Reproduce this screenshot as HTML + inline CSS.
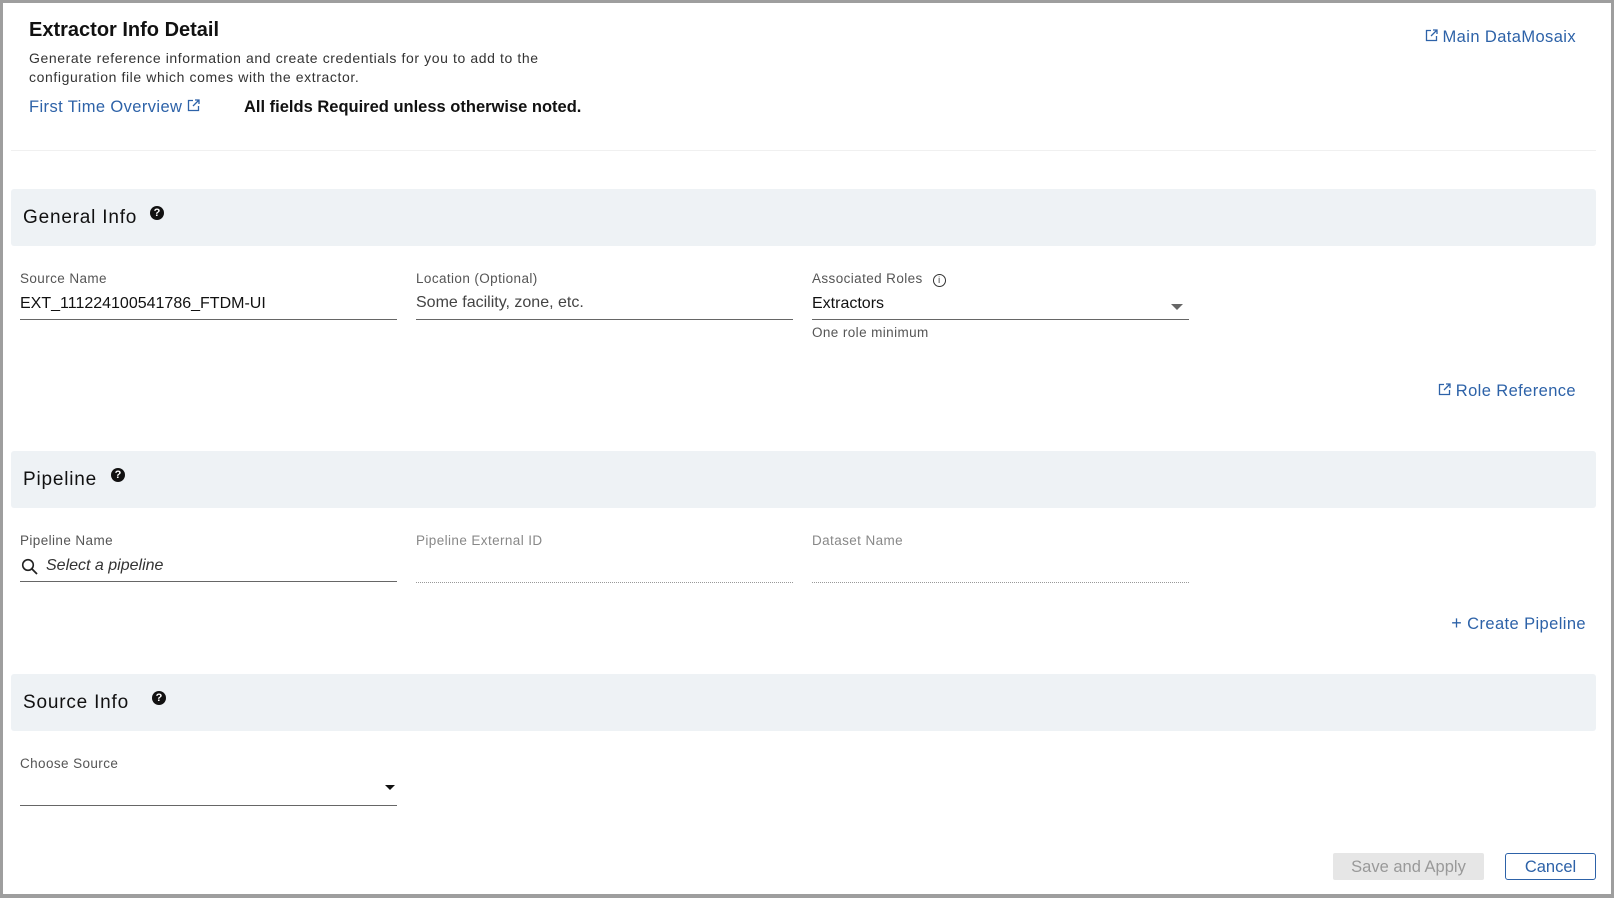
<!DOCTYPE html>
<html><head><meta charset="utf-8"><style>
*{margin:0;padding:0;box-sizing:border-box}
body{width:1614px;height:898px;overflow:hidden;background:#fff;font-family:"Liberation Sans",Arial,sans-serif;color:#111;position:relative}
.frame{position:absolute;left:0;top:0;width:1614px;height:898px;border:3px solid #9e9e9e;border-bottom-width:4px}
.a{position:absolute;white-space:nowrap}
.band{position:absolute;left:11px;width:1585px;height:57px;background:#eef2f5;border-radius:3px}
.band .t{position:absolute;left:12px;top:18px;font-size:19px;letter-spacing:.8px;color:#111}
.q{position:absolute;top:17px;width:14px;height:14px;border-radius:50%;background:#111;color:#fff;font-size:11px;font-weight:bold;text-align:center;line-height:14px}
.lbl{font-size:13.5px;color:#555;letter-spacing:.4px}
.val{font-size:16px;color:#111}
.ul{position:absolute;height:1px;background:#666;width:377px}
.dot{position:absolute;width:377px;border-top:1px dotted #999}
.link{color:#2d62a8;font-size:16.5px;letter-spacing:.4px}
.ext{display:inline-block;vertical-align:0px}
</style></head><body>
<div class="frame"></div>
<div class="a" style="left:29px;top:19px;font-size:20px;font-weight:bold">Extractor Info Detail</div>
<div class="a" style="left:29px;top:49px;font-size:14px;color:#333;line-height:18.5px;letter-spacing:.6px">Generate reference information and create credentials for you to add to the<br>configuration file which comes with the extractor.</div>
<div class="a link" style="left:29px;top:98px">First Time Overview <svg class="ext" width="13" height="13" viewBox="0 0 13 13"><path d="M6 1.5H1.5v10h10V7M8 1h4v4M12 1L6 7" fill="none" stroke="#2d62a8" stroke-width="1.3"/></svg></div>
<div class="a" style="left:244px;top:98px;font-size:16.5px;font-weight:bold">All fields Required unless otherwise noted.</div>
<div class="a link" style="right:38px;top:28px"><svg class="ext" width="13" height="13" viewBox="0 0 13 13"><path d="M6 1.5H1.5v10h10V7M8 1h4v4M12 1L6 7" fill="none" stroke="#2d62a8" stroke-width="1.3"/></svg> Main DataMosaix</div>
<div class="a" style="left:11px;top:150px;width:1585px;height:1px;background:#f0f0f0"></div>

<div class="band" style="top:189px"><div class="t">General Info</div><div class="q" style="left:139px">?</div></div>
<div class="a lbl" style="left:20px;top:271px">Source Name</div>
<div class="a val" style="left:20px;top:295px">EXT_111224100541786_FTDM-UI</div>
<div class="ul" style="left:20px;top:319px"></div>
<div class="a lbl" style="left:416px;top:271px">Location (Optional)</div>
<div class="a val" style="left:416px;top:294px;color:#444">Some facility, zone, etc.</div>
<div class="ul" style="left:416px;top:319px"></div>
<div class="a lbl" style="left:812px;top:271px">Associated Roles <span style="display:inline-block;width:13px;height:13px;border:1.3px solid #333;border-radius:50%;font-size:9px;text-align:center;line-height:11px;color:#333;margin-left:6px;vertical-align:0px">i</span></div>
<div class="a val" style="left:812px;top:295px">Extractors</div>
<div class="a" style="left:1171px;top:304px;border-left:6px solid transparent;border-right:6px solid transparent;border-top:6px solid #666"></div>
<div class="ul" style="left:812px;top:319px"></div>
<div class="a lbl" style="left:812px;top:325px">One role minimum</div>
<div class="a link" style="right:38px;top:382px"><svg class="ext" width="13" height="13" viewBox="0 0 13 13"><path d="M6 1.5H1.5v10h10V7M8 1h4v4M12 1L6 7" fill="none" stroke="#2d62a8" stroke-width="1.3"/></svg> Role Reference</div>

<div class="band" style="top:451px"><div class="t">Pipeline</div><div class="q" style="left:100px">?</div></div>
<div class="a lbl" style="left:20px;top:533px">Pipeline Name</div>
<svg class="a" style="left:21px;top:558px" width="18" height="18" viewBox="0 0 18 18"><circle cx="7" cy="7" r="5.3" fill="none" stroke="#222" stroke-width="1.6"/><path d="M11 11l5 5" stroke="#222" stroke-width="1.8"/></svg>
<div class="a val" style="left:46px;top:557px;font-style:italic;color:#333">Select a pipeline</div>
<div class="ul" style="left:20px;top:581px"></div>
<div class="a lbl" style="left:416px;top:533px;color:#888">Pipeline External ID</div>
<div class="dot" style="left:416px;top:582px"></div>
<div class="a lbl" style="left:812px;top:533px;color:#888">Dataset Name</div>
<div class="dot" style="left:812px;top:582px"></div>
<div class="a link" style="right:28px;top:613px"><span style="font-size:18px">+</span> Create Pipeline</div>

<div class="band" style="top:674px"><div class="t">Source Info</div><div class="q" style="left:141px">?</div></div>
<div class="a lbl" style="left:20px;top:756px">Choose Source</div>
<div class="a" style="left:385px;top:785px;border-left:5px solid transparent;border-right:5px solid transparent;border-top:5px solid #111"></div>
<div class="ul" style="left:20px;top:805px"></div>

<div class="a" style="left:1333px;top:853px;width:151px;height:27px;background:#e6e6e6;border-radius:2px;color:#999;font-size:16.5px;text-align:center;line-height:29px">Save and Apply</div>
<div class="a" style="left:1505px;top:853px;width:91px;height:27px;border:1.3px solid #2d62a8;border-radius:3px;color:#2d62a8;font-size:16.5px;text-align:center;line-height:27px">Cancel</div>
</body></html>
